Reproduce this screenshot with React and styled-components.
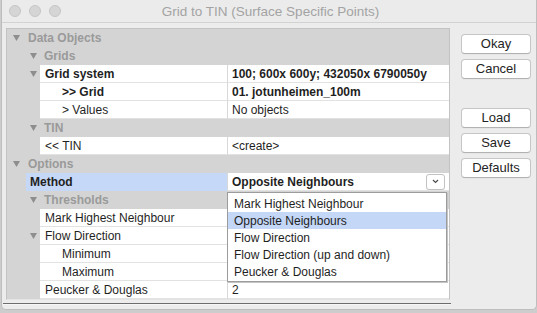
import React from "react";
import styled, { createGlobalStyle } from "styled-components";

const GlobalStyle = createGlobalStyle`
  html, body { margin: 0; padding: 0; }
  body {
    background: #cdcdcd;
    font-family: "Liberation Sans", Arial, sans-serif;
    -webkit-font-smoothing: antialiased;
  }
  #root { width: 537px; height: 313px; overflow: hidden; }
`;

const Window = styled.div`
  margin-left: 1px;
  width: 536px;
  height: 310px;
  box-sizing: border-box;
  background: #ececec;
  border: 1px solid #bdbdbd;
  border-top: none;
  border-radius: 0 0 5px 5px;
  display: flex;
  flex-direction: column;
  overflow: hidden;
`;

const TitleBar = styled.div`
  height: 22px;
  flex: none;
  display: flex;
  align-items: center;
  padding: 0 7px;
  background: #ebebeb;
  border-bottom: 1px solid #d2d2d2;
`;

const Lights = styled.div`
  display: flex;
  gap: 8px;
  width: 52px;
`;

const Light = styled.span`
  width: 12px;
  height: 12px;
  box-sizing: border-box;
  border-radius: 50%;
  background: #d5d5d5;
  border: 1px solid #c6c6c6;
`;

const Title = styled.div`
  flex: 1;
  text-align: center;
  margin-right: 49px;
  font-size: 13.5px;
  color: #a3a3a3;
  white-space: nowrap;
`;

const Content = styled.div`
  display: flex;
  gap: 11px;
  padding: 5px 5px 0 4px;
`;

const GridPanel = styled.div`
  position: relative;
  width: 444px;
  box-sizing: border-box;
  border: 1px solid #c3c3c3;
  border-bottom-color: #e4e4e4;
  background: #d4d4d4;
  font-size: 12px;
  color: #1f1f1f;
`;

const CategoryRow = styled.div`
  height: 18px;
  display: flex;
  align-items: center;
  gap: ${(p) => (p.$level === 0 ? 8 : 7)}px;
  padding-left: ${(p) => (p.$level === 0 ? 6 : 23)}px;
  background: #d4d4d4;
  color: #9a9a9a;
  font-weight: bold;
  line-height: 18px;
`;

const PropRow = styled.div`
  height: 18px;
  display: flex;
`;

const Gutter = styled.div`
  width: ${(p) => p.$width}px;
  flex: none;
  display: flex;
  align-items: center;
  justify-content: flex-end;
  padding-right: 3px;
  box-sizing: border-box;
  background: #d4d4d4;
`;

const NameCell = styled.div`
  flex: 1;
  min-width: 0;
  box-sizing: border-box;
  padding-left: ${(p) => p.$indent}px;
  background: ${(p) => (p.$selected ? "#c6d8f7" : "#ffffff")};
  border-right: 1px solid #d8d8d8;
  border-bottom: 1px solid ${(p) => (p.$selected ? "#c6d8f7" : "#e2e2e2")};
  font-weight: ${(p) => (p.$bold ? "bold" : "normal")};
  line-height: 18px;
  white-space: nowrap;
  overflow: hidden;
`;

const ValueCell = styled.div`
  width: 221px;
  flex: none;
  box-sizing: border-box;
  display: flex;
  align-items: center;
  justify-content: space-between;
  padding: 0 4px;
  background: #ffffff;
  border-bottom: 1px solid #e2e2e2;
  font-weight: ${(p) => (p.$bold ? "bold" : "normal")};
  line-height: 18px;
  white-space: nowrap;
  overflow: hidden;
`;

const DropButton = styled.div`
  width: 19px;
  height: 16px;
  box-sizing: border-box;
  border: 1px solid #c2c2c2;
  border-radius: 3px;
  background: #fff;
  display: flex;
  align-items: center;
  justify-content: center;
  box-shadow: 0 1px 0 rgba(0, 0, 0, 0.06);
`;

const DropList = styled.div`
  position: absolute;
  left: 220px;
  top: 163px;
  width: 220px;
  box-sizing: border-box;
  padding: 2px 0 1px;
  background: #fff;
  border: 1px solid #9c9c9c;
  box-shadow: 1px 1px 0 #c4c4c4;
`;

const DropItem = styled.div`
  height: 17px;
  line-height: 18px;
  padding-left: 6px;
  background: ${(p) => (p.$active ? "#c4d7f7" : "transparent")};
  color: #1f1f1f;
  white-space: nowrap;
`;

const ButtonColumn = styled.div`
  width: 70px;
  display: flex;
  flex-direction: column;
  gap: 5px;
  padding-top: 6px;
`;

const Button = styled.button`
  height: 20px;
  margin-top: ${(p) => p.$gapBefore || 0}px;
  padding: 0;
  box-sizing: border-box;
  border: 1px solid #c6c6c6;
  border-bottom-color: #b2b2b2;
  border-radius: 4px;
  background: #ffffff;
  font-family: "Liberation Sans", Arial, sans-serif;
  font-size: 13px;
  line-height: 18px;
  color: #242424;
  box-shadow: 0 0.5px 0 rgba(0, 0, 0, 0.05);
`;

const Divider = styled.div`
  margin: 3px 0 0 1px;
  width: 448px;
  border-top: 1px solid #6d6d6d;
  border-bottom: 1px solid #f7f7f7;
`;

const Triangle = () => (
  <svg width="7" height="6" viewBox="0 0 7 6">
    <polygon points="0,0 7,0 3.5,6" fill="#8e8e8e" />
  </svg>
);

const Chevron = () => (
  <svg width="7" height="5" viewBox="0 0 7 5">
    <polyline points="1,1 3.5,3.5 6,1" fill="none" stroke="#4a4a4a" strokeWidth="1.1" />
  </svg>
);

const rows = [
  { cat: true, level: 0, label: "Data Objects" },
  { cat: true, level: 1, label: "Grids" },
  { gutter: 33, indent: 5, expand: true, name: "Grid system", value: "100; 600x 600y; 432050x 6790050y", bold: true },
  { gutter: 33, indent: 22, name: ">> Grid", value: "01. jotunheimen_100m", bold: true },
  { gutter: 33, indent: 22, name: "> Values", value: "No objects" },
  { cat: true, level: 1, label: "TIN" },
  { gutter: 33, indent: 5, name: "<< TIN", value: "<create>" },
  { cat: true, level: 0, label: "Options" },
  { gutter: 19, indent: 4, name: "Method", value: "Opposite Neighbours", bold: true, selected: true, dropdown: true },
  { cat: true, level: 1, label: "Thresholds" },
  { gutter: 33, indent: 5, name: "Mark Highest Neighbour", value: "" },
  { gutter: 33, indent: 5, expand: true, name: "Flow Direction", value: "" },
  { gutter: 33, indent: 22, name: "Minimum", value: "" },
  { gutter: 33, indent: 22, name: "Maximum", value: "" },
  { gutter: 33, indent: 5, name: "Peucker & Douglas", value: "2" },
];

const choices = [
  "Mark Highest Neighbour",
  "Opposite Neighbours",
  "Flow Direction",
  "Flow Direction (up and down)",
  "Peucker & Douglas",
];

export default function App() {
  return (
    <>
      <GlobalStyle />
      <Window>
        <TitleBar>
          <Lights>
            <Light />
            <Light />
            <Light />
          </Lights>
          <Title>Grid to TIN (Surface Specific Points)</Title>
        </TitleBar>
        <Content>
          <GridPanel>
            {rows.map((r, i) =>
              r.cat ? (
                <CategoryRow key={i} $level={r.level}>
                  <Triangle />
                  <span>{r.label}</span>
                </CategoryRow>
              ) : (
                <PropRow key={i}>
                  <Gutter $width={r.gutter}>{r.expand && <Triangle />}</Gutter>
                  <NameCell $indent={r.indent} $selected={r.selected} $bold={r.bold}>
                    {r.name}
                  </NameCell>
                  <ValueCell $bold={r.bold}>
                    <span>{r.value}</span>
                    {r.dropdown && (
                      <DropButton>
                        <Chevron />
                      </DropButton>
                    )}
                  </ValueCell>
                </PropRow>
              )
            )}
            <DropList>
              {choices.map((c) => (
                <DropItem key={c} $active={c === "Opposite Neighbours"}>
                  {c}
                </DropItem>
              ))}
            </DropList>
          </GridPanel>
          <ButtonColumn>
            <Button>Okay</Button>
            <Button>Cancel</Button>
            <Button $gapBefore={24}>Load</Button>
            <Button>Save</Button>
            <Button>Defaults</Button>
          </ButtonColumn>
        </Content>
        <Divider />
      </Window>
    </>
  );
}
